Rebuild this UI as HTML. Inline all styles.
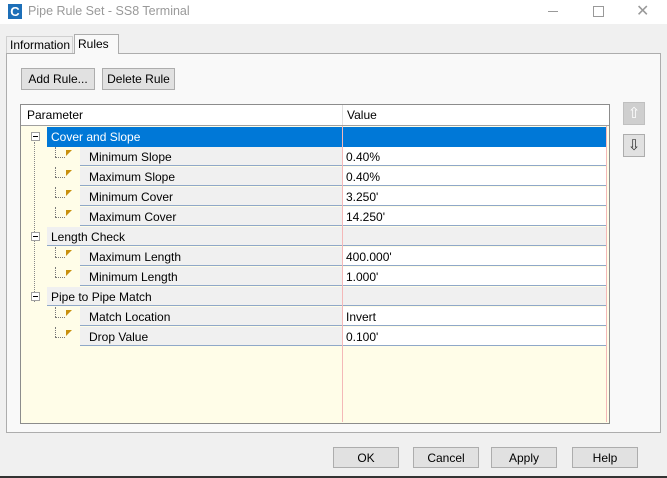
<!DOCTYPE html><html><head><style>
body{margin:0;width:667px;height:478px;background:#f0f0f0;font-family:"Liberation Sans",sans-serif;font-size:12px;color:#000;position:relative;overflow:hidden}
.a{position:absolute}
.btn{position:absolute;background:#e1e1e1;border:1px solid #adadad;box-sizing:border-box;text-align:center;line-height:20px}
.row{position:absolute;left:21px;width:585px;height:20px;line-height:20px}
.nm{position:absolute;left:59px;width:262px;height:19px;background:#f0f0f0;border-bottom:1px solid #8fa8c8;padding-left:9px;box-sizing:border-box}
.vl{position:absolute;left:322px;width:263px;height:19px;background:#fff;border-bottom:1px solid #8fa8c8;padding-left:3px;box-sizing:border-box}
.cat{position:absolute;left:26px;width:559px;height:19px;background:#f0f0f0;border-bottom:1px solid #8fa8c8;padding-left:4px;box-sizing:border-box}
.tri{position:absolute;left:45px;top:3px;width:0;height:0;border-top:6px solid #c8900c;border-right:6px solid transparent}
.cn{position:absolute;left:34px;top:10px;width:10px;border-top:1px dotted #777}
.vt{position:absolute;left:34px;top:0;height:10px;border-left:1px dotted #777}
.mn{position:absolute;left:10px;top:5px;width:9px;height:9px;border:1px solid #a0a0a0;background:#fff;box-sizing:border-box}
.mn:after{content:"";position:absolute;left:1px;top:3px;width:5px;height:1px;background:#000}
</style></head><body>
<div class="a" style="left:0;top:0;width:667px;height:24px;background:#fff"></div>
<div class="a" style="left:8px;top:4px;width:14px;height:15px;background:#1d6fb8;color:#fff;font-weight:bold;font-size:13px;line-height:15px;text-align:center">C</div>
<div class="a" style="left:28px;top:4px;color:#999;font-size:12.5px">Pipe Rule Set - SS8 Terminal</div>
<div class="a" style="left:548px;top:11px;width:10px;height:1px;background:#999"></div>
<div class="a" style="left:593px;top:6px;width:9px;height:9px;border:1px solid #999"></div>
<div class="a" style="left:636px;top:1px;color:#999;font-size:16px">✕</div>
<div class="a" style="left:6px;top:53px;width:655px;height:380px;background:#f9f9f9;border:1px solid #adadad;box-sizing:border-box"></div>
<div class="a" style="left:6px;top:36px;width:67px;height:17px;border:1px solid #d0d0d0;border-bottom:none;background:#f0f0f0;box-sizing:border-box;padding-left:3px;line-height:16px">Information</div>
<div class="a" style="left:74px;top:34px;width:45px;height:20px;border:1px solid #adadad;border-bottom:none;background:#f9f9f9;box-sizing:border-box;padding-left:3px;line-height:18px">Rules</div>
<div class="btn" style="left:21px;top:68px;width:74px;height:22px">Add Rule...</div>
<div class="btn" style="left:102px;top:68px;width:73px;height:22px">Delete Rule</div>
<div class="a" style="left:20px;top:104px;width:590px;height:320px;border:1px solid #8c8c8c;background:#fffde8;box-sizing:border-box"></div>
<div class="a" style="left:21px;top:105px;width:588px;height:20px;background:#fff;border-bottom:1px solid #a0a0a0;line-height:20px"><span style="position:absolute;left:6px">Parameter</span><span style="position:absolute;left:326px">Value</span><span style="position:absolute;left:321px;top:0;width:1px;height:20px;background:#e0e0e0"></span></div>
<div class="a" style="left:34px;top:142px;height:160px;border-left:1px dotted #888"></div>
<div class="row" style="top:127px"><div class="mn"></div><div class="cat" style="background:#0078d7;color:#fff;border:none;height:20px">Cover and Slope</div></div>
<div class="row" style="top:147px"><div class="vt"></div><div class="cn"></div><div class="tri"></div><div class="nm">Minimum Slope</div><div class="vl">0.40%</div></div>
<div class="row" style="top:167px"><div class="vt"></div><div class="cn"></div><div class="tri"></div><div class="nm">Maximum Slope</div><div class="vl">0.40%</div></div>
<div class="row" style="top:187px"><div class="vt"></div><div class="cn"></div><div class="tri"></div><div class="nm">Minimum Cover</div><div class="vl">3.250'</div></div>
<div class="row" style="top:207px"><div class="vt"></div><div class="cn"></div><div class="tri"></div><div class="nm">Maximum Cover</div><div class="vl">14.250'</div></div>
<div class="row" style="top:227px"><div class="mn"></div><div class="cat">Length Check</div></div>
<div class="row" style="top:247px"><div class="vt"></div><div class="cn"></div><div class="tri"></div><div class="nm">Maximum Length</div><div class="vl">400.000'</div></div>
<div class="row" style="top:267px"><div class="vt"></div><div class="cn"></div><div class="tri"></div><div class="nm">Minimum Length</div><div class="vl">1.000'</div></div>
<div class="row" style="top:287px"><div class="mn"></div><div class="cat">Pipe to Pipe Match</div></div>
<div class="row" style="top:307px"><div class="vt"></div><div class="cn"></div><div class="tri"></div><div class="nm">Match Location</div><div class="vl">Invert</div></div>
<div class="row" style="top:327px"><div class="vt"></div><div class="cn"></div><div class="tri"></div><div class="nm">Drop Value</div><div class="vl">0.100'</div></div>
<div class="a" style="left:342px;top:126px;width:1px;height:296px;background:#f4b8b8"></div>
<div class="a" style="left:606px;top:126px;width:1px;height:296px;background:#f4b8b8"></div>
<div class="a" style="left:623px;top:102px;width:22px;height:23px;background:#cfcfcf;border:1px solid #c0c0c0;box-sizing:border-box;color:#fff;text-align:center;font-size:15px;line-height:21px">⇧</div>
<div class="a" style="left:623px;top:134px;width:22px;height:23px;background:#e1e1e1;border:1px solid #adadad;box-sizing:border-box;color:#333;text-align:center;font-size:15px;line-height:21px">⇩</div>
<div class="btn" style="left:333px;top:447px;width:66px;height:21px">OK</div>
<div class="btn" style="left:413px;top:447px;width:66px;height:21px">Cancel</div>
<div class="btn" style="left:491px;top:447px;width:66px;height:21px">Apply</div>
<div class="btn" style="left:572px;top:447px;width:66px;height:21px">Help</div>
<div class="a" style="left:0;top:476px;width:667px;height:2px;background:#333"></div>
</body></html>
